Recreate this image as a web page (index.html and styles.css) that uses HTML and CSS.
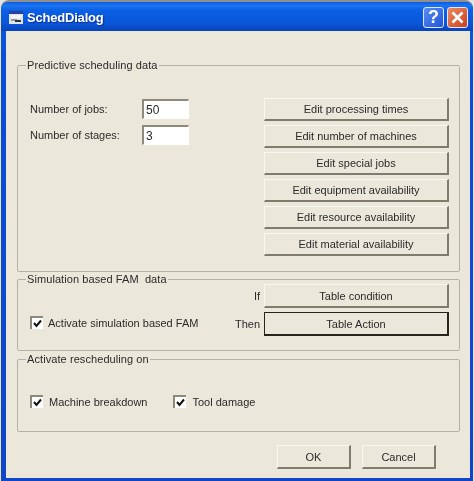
FILE: index.html
```html
<!DOCTYPE html>
<html lang="en">
<head>
    <meta charset="UTF-8">
    <meta name="viewport" content="width=device-width, initial-scale=1.0">
    <title>SchedDialog</title>
    <link rel="stylesheet" href="styles.css">
</head>
<body>
    <div class="window">
        <div class="titlebar">
            <svg class="app-icon" width="14" height="13" viewBox="0 0 14 13">
                <rect x="0" y="0" width="14" height="13" fill="#dfe6f2"/>
                <rect x="0" y="0" width="14" height="3" fill="#2a3f9a"/>
                <rect x="2" y="4" width="10" height="3" fill="#f4f4f4"/>
                <rect x="2" y="8" width="6" height="2" fill="#9a9a9a"/>
                <rect x="6" y="9" width="6" height="2" fill="#333333"/>
            </svg>
            <span class="title">SchedDialog</span>
            <div class="caption-btn help">?</div>
            <div class="caption-btn close">
                <svg width="15" height="15" viewBox="0 0 15 15">
                    <path d="M2.5 2.5 L12.5 12.5 M12.5 2.5 L2.5 12.5" stroke="#ffffff" stroke-width="2.6"/>
                </svg>
            </div>
        </div>

        <div class="client">
            <fieldset class="group group-data">
                <legend>Predictive scheduling data</legend>
                <div class="data-row">
                    <div class="fields">
                        <div class="field">
                            <label>Number of jobs:</label>
                            <input class="text-input" type="text" value="50">
                        </div>
                        <div class="field">
                            <label>Number of stages:</label>
                            <input class="text-input" type="text" value="3">
                        </div>
                    </div>
                    <div class="button-stack">
                        <button class="button">Edit processing times</button>
                        <button class="button">Edit number of machines</button>
                        <button class="button">Edit special jobs</button>
                        <button class="button">Edit equipment availability</button>
                        <button class="button">Edit resource availability</button>
                        <button class="button">Edit material availability</button>
                    </div>
                </div>
            </fieldset>

            <fieldset class="group group-fam">
                <legend>Simulation based FAM  data</legend>
                <div class="fam-row">
                    <div class="check">
                        <span class="check-box"><svg width="9" height="9" viewBox="0 0 9 9"><path d="M1 4 L3.5 7 L8 1.5" fill="none" stroke="#111111" stroke-width="2"/></svg></span>
                        Activate simulation based FAM
                    </div>
                    <div class="rules">
                        <div class="rule">
                            <span class="rule-label">If</span>
                            <button class="button">Table condition</button>
                        </div>
                        <div class="rule">
                            <span class="rule-label">Then</span>
                            <button class="button default">Table Action</button>
                        </div>
                    </div>
                </div>
            </fieldset>

            <fieldset class="group group-resched">
                <legend>Activate rescheduling on</legend>
                <div class="check-row">
                    <div class="check">
                        <span class="check-box"><svg width="9" height="9" viewBox="0 0 9 9"><path d="M1 4 L3.5 7 L8 1.5" fill="none" stroke="#111111" stroke-width="2"/></svg></span>
                        Machine breakdown
                    </div>
                    <div class="check">
                        <span class="check-box"><svg width="9" height="9" viewBox="0 0 9 9"><path d="M1 4 L3.5 7 L8 1.5" fill="none" stroke="#111111" stroke-width="2"/></svg></span>
                        Tool damage
                    </div>
                </div>
            </fieldset>

            <div class="actions">
                <button class="button action">OK</button>
                <button class="button action">Cancel</button>
            </div>
        </div>
    </div>
</body>
</html>
```

FILE: styles.css
```css
html, body {
    height: 100%;
}
body {
    margin: 0;
    background: #e4e4e4;
    font-family: "Liberation Sans", Arial, sans-serif;
    font-size: 11px;
    color: #2a2a2a;
    overflow: hidden;
}
.window {
    box-sizing: border-box;
    width: 472px;
    height: 481px;
    margin-left: 1px;
    padding: 0 3px 3px 5px;
    background: linear-gradient(#0a5ce0, #0a4fd4 60px, #0f45c8);
    border-top: 2px solid #8f8f8f;
    border-radius: 8px 8px 0 0;
    display: flex;
    flex-direction: column;
    filter: blur(0.5px);
}
.titlebar {
    box-sizing: border-box;
    height: 29px;
    flex: none;
    display: flex;
    align-items: center;
    margin: 0 -3px 0 -5px;
    padding: 2px 5px 0 8px;
    background: linear-gradient(#0b5ae0, #1b74f0 12%, #0a5fe4 30%, #0a55d8 75%, #0843b8);
    border-radius: 7px 7px 0 0;
}
.app-icon {
    margin-right: 4px;
}
.title {
    flex: 1;
    color: #fff;
    font-size: 13px;
    font-weight: bold;
    letter-spacing: -0.2px;
    text-shadow: 1px 1px 1px #0a2f90;
}
.caption-btn {
    box-sizing: border-box;
    width: 21px;
    height: 21px;
    margin-left: 3px;
    border: 1px solid #dfe8f8;
    border-radius: 3px;
    display: flex;
    align-items: center;
    justify-content: center;
    color: #fff;
}
.help {
    background: linear-gradient(135deg, #5b8df0, #1f55d8);
    font-size: 18px;
    font-weight: bold;
}
.close {
    background: linear-gradient(135deg, #ee8a64, #c8401c);
}
.client {
    flex: 1;
    background: #ebe8db;
    padding: 27px 10px 0 11px;
    display: flex;
    flex-direction: column;
}
.group {
    box-sizing: border-box;
    margin: 0;
    padding: 0;
    border: 1px solid #b5b2a4;
    border-radius: 2px;
    min-width: 0;
}
.group legend {
    margin-left: 8px;
    padding: 0 1px;
    font-size: 11px;
    letter-spacing: 0.08px;
    line-height: 14px;
    white-space: pre;
}
.group-data {
    height: 214px;
}
.group-fam {
    height: 79px;
}
.group-resched {
    height: 80px;
    margin-top: 1px;
}
.data-row {
    display: flex;
    justify-content: space-between;
    padding: 26px 10px 0 12px;
}
.fields {
    display: flex;
    flex-direction: column;
    gap: 6px;
    padding-top: 1px;
}
.field {
    display: flex;
    align-items: center;
    width: 159px;
    justify-content: space-between;
}
.text-input {
    box-sizing: border-box;
    width: 47px;
    height: 20px;
    padding: 0 2px;
    background: #fff;
    border: 1px solid #fff;
    border-top-color: #8d8a7c;
    border-left-color: #8d8a7c;
    border-top-width: 2px;
    border-left-width: 2px;
    font: 12px "Liberation Sans", Arial, sans-serif;
    color: #2a2a2a;
    outline: none;
}
.button-stack {
    width: 185px;
    display: flex;
    flex-direction: column;
    gap: 4px;
}
.button {
    box-sizing: border-box;
    width: 100%;
    height: 23px;
    padding: 0;
    background: #ebe8db;
    border: 1px solid #f8f7f0;
    border-right: 2px solid #7f7c6e;
    border-bottom: 2px solid #7f7c6e;
    font: 11px "Liberation Sans", Arial, sans-serif;
    color: #2a2a2a;
}
.button.default {
    border: 2px solid #26241c;
    border-top-width: 1px;
    border-left-width: 1px;
}
.fam-row {
    display: flex;
    justify-content: space-between;
    align-items: flex-end;
    padding: 0 10px 0 12px;
}
.rules {
    display: flex;
    flex-direction: column;
    gap: 4px;
    margin-top: -2px;
}
.rule {
    display: flex;
    align-items: center;
    justify-content: flex-end;
    gap: 4px;
}
.rule .button {
    width: 185px;
    height: 24px;
}
.rule-label {
    text-align: right;
}
.check {
    display: flex;
    align-items: center;
    gap: 5px;
}
.fam-row .check {
    padding-bottom: 7px;
}
.check-box {
    box-sizing: border-box;
    width: 13px;
    height: 13px;
    background: #fff;
    border-top: 2px solid #8d8a7c;
    border-left: 2px solid #8d8a7c;
    display: flex;
    align-items: center;
    justify-content: center;
}
.check-row {
    display: flex;
    gap: 26px;
    padding: 29px 0 0 12px;
}
.check-row .check {
    gap: 6px;
}
.actions {
    display: flex;
    justify-content: flex-end;
    gap: 11px;
    padding: 13px 24px 0 0;
}
.button.action {
    width: 74px;
    height: 24px;
}
```
